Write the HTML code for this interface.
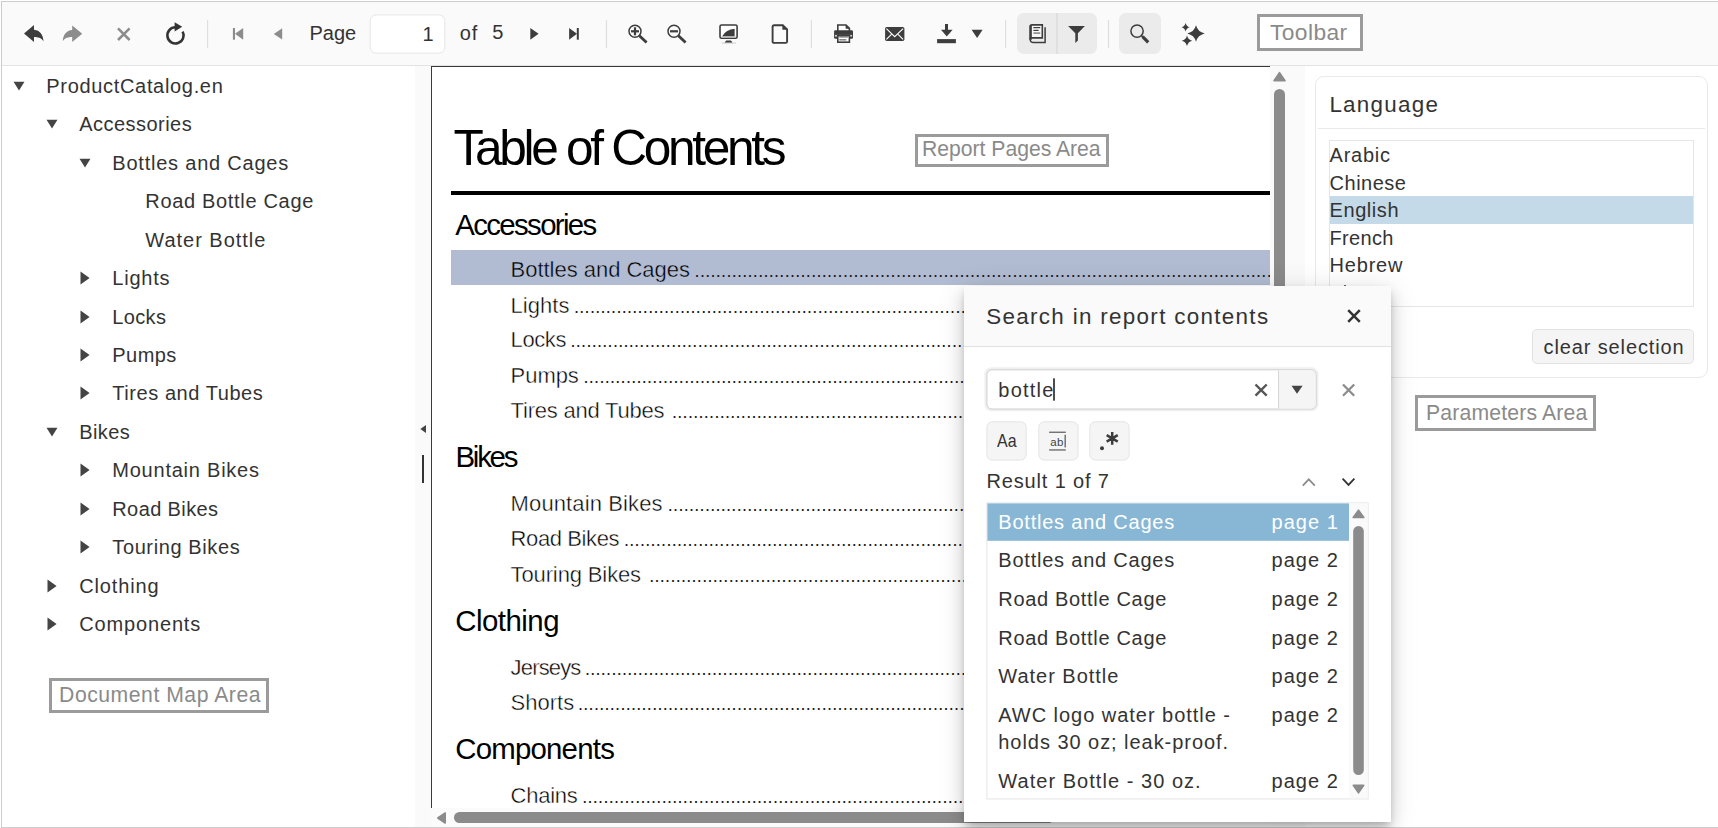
<!DOCTYPE html>
<html><head><meta charset="utf-8"><title>Report Viewer</title>
<style>
html,body{margin:0;padding:0;background:#fff;}
body{width:1718px;height:828px;position:relative;overflow:hidden;font-family:"Liberation Sans", sans-serif;}
div,span,svg{box-sizing:border-box;}
.t{position:absolute;white-space:pre;line-height:1;font-family:"Liberation Sans", sans-serif;}
</style></head><body>
<div style="position:absolute;left:1px;top:1px;width:1717px;height:827px;border:1px solid #cdcdcd;border-right:none;background:#fff;"></div>
<div style="position:absolute;left:2px;top:2px;width:1716px;height:63px;background:#fafafa;"></div>
<div style="position:absolute;left:2px;top:65px;width:1716px;height:1px;background:#e3e3e3;"></div>
<div style="position:absolute;left:415px;top:66px;width:16px;height:761px;background:#fafafa;"></div>
<div style="position:absolute;left:431px;top:808px;width:839px;height:19px;background:#fbfbfb;"></div>
<div style="position:absolute;left:1270px;top:66px;width:35px;height:761px;background:#fafafa;"></div>
<div style="position:absolute;left:431px;top:66px;width:839px;height:742px;border-left:1px solid #3a3a3a;border-top:1px solid #3a3a3a;background:#fff;"></div>
<span class="t" style="left:46.3px;top:76px;font-size:20.0px;letter-spacing:0.677px;color:#333;">ProductCatalog.en</span>
<svg style="position:absolute;left:12px;top:80.4px" width="14" height="12" viewBox="0 0 14 12"><path d="M1.5 1.7 L12.5 1.7 L7 10.6 Z" fill="#444"/></svg>
<span class="t" style="left:79.3px;top:114px;font-size:20.0px;letter-spacing:0.455px;color:#333;">Accessories</span>
<svg style="position:absolute;left:45px;top:118.4px" width="14" height="12" viewBox="0 0 14 12"><path d="M1.5 1.7 L12.5 1.7 L7 10.6 Z" fill="#444"/></svg>
<span class="t" style="left:112.3px;top:153px;font-size:20.0px;letter-spacing:0.78px;color:#333;">Bottles and Cages</span>
<svg style="position:absolute;left:78px;top:157.4px" width="14" height="12" viewBox="0 0 14 12"><path d="M1.5 1.7 L12.5 1.7 L7 10.6 Z" fill="#444"/></svg>
<span class="t" style="left:145.3px;top:191px;font-size:20.0px;letter-spacing:0.677px;color:#333;">Road Bottle Cage</span>
<span class="t" style="left:145.3px;top:230px;font-size:20.0px;letter-spacing:0.983px;color:#333;">Water Bottle</span>
<span class="t" style="left:112.3px;top:268px;font-size:20.0px;letter-spacing:0.784px;color:#333;">Lights</span>
<svg style="position:absolute;left:78.9px;top:271.4px" width="12" height="14" viewBox="0 0 12 14"><path d="M1.5 0.6 L10.6 7 L1.5 13.4 Z" fill="#444"/></svg>
<span class="t" style="left:112.3px;top:307px;font-size:20.0px;letter-spacing:0.338px;color:#333;">Locks</span>
<svg style="position:absolute;left:78.9px;top:310.4px" width="12" height="14" viewBox="0 0 12 14"><path d="M1.5 0.6 L10.6 7 L1.5 13.4 Z" fill="#444"/></svg>
<span class="t" style="left:112.3px;top:345px;font-size:20.0px;letter-spacing:0.447px;color:#333;">Pumps</span>
<svg style="position:absolute;left:78.9px;top:348.4px" width="12" height="14" viewBox="0 0 12 14"><path d="M1.5 0.6 L10.6 7 L1.5 13.4 Z" fill="#444"/></svg>
<span class="t" style="left:112.3px;top:383px;font-size:20.0px;letter-spacing:0.56px;color:#333;">Tires and Tubes</span>
<svg style="position:absolute;left:78.9px;top:386.4px" width="12" height="14" viewBox="0 0 12 14"><path d="M1.5 0.6 L10.6 7 L1.5 13.4 Z" fill="#444"/></svg>
<span class="t" style="left:79.3px;top:422px;font-size:20.0px;letter-spacing:0.397px;color:#333;">Bikes</span>
<svg style="position:absolute;left:45px;top:426.4px" width="14" height="12" viewBox="0 0 14 12"><path d="M1.5 1.7 L12.5 1.7 L7 10.6 Z" fill="#444"/></svg>
<span class="t" style="left:112.3px;top:460px;font-size:20.0px;letter-spacing:0.767px;color:#333;">Mountain Bikes</span>
<svg style="position:absolute;left:78.9px;top:463.4px" width="12" height="14" viewBox="0 0 12 14"><path d="M1.5 0.6 L10.6 7 L1.5 13.4 Z" fill="#444"/></svg>
<span class="t" style="left:112.3px;top:499px;font-size:20.0px;letter-spacing:0.383px;color:#333;">Road Bikes</span>
<svg style="position:absolute;left:78.9px;top:502.4px" width="12" height="14" viewBox="0 0 12 14"><path d="M1.5 0.6 L10.6 7 L1.5 13.4 Z" fill="#444"/></svg>
<span class="t" style="left:112.3px;top:537px;font-size:20.0px;letter-spacing:0.607px;color:#333;">Touring Bikes</span>
<svg style="position:absolute;left:78.9px;top:540.4px" width="12" height="14" viewBox="0 0 12 14"><path d="M1.5 0.6 L10.6 7 L1.5 13.4 Z" fill="#444"/></svg>
<span class="t" style="left:79.3px;top:576px;font-size:20.0px;letter-spacing:0.838px;color:#333;">Clothing</span>
<svg style="position:absolute;left:45.900000000000006px;top:579.4px" width="12" height="14" viewBox="0 0 12 14"><path d="M1.5 0.6 L10.6 7 L1.5 13.4 Z" fill="#444"/></svg>
<span class="t" style="left:79.3px;top:614px;font-size:20.0px;letter-spacing:0.839px;color:#333;">Components</span>
<svg style="position:absolute;left:45.900000000000006px;top:617.4px" width="12" height="14" viewBox="0 0 12 14"><path d="M1.5 0.6 L10.6 7 L1.5 13.4 Z" fill="#444"/></svg>
<svg style="position:absolute;left:418px;top:424px" width="10" height="10" viewBox="0 0 10 10"><path d="M2.3 5 L8 1.1 L8 8.9 Z" fill="#444"/></svg>
<div style="position:absolute;left:422px;top:455px;width:2px;height:28px;background:#333;"></div>
<svg style="position:absolute;left:0;top:0" width="1718" height="66" viewBox="0 0 1718 66"><rect x="1017" y="13" width="80" height="41" rx="6.5" fill="#ebebeb"/><rect x="1056.3" y="13" width="1.3" height="41" fill="#dadada"/><rect x="1119" y="13" width="42" height="41" rx="6.5" fill="#ebebeb"/><rect x="207.0" y="20" width="1.2" height="28" fill="#dfdfdf"/><rect x="605.9" y="20" width="1.2" height="28" fill="#dfdfdf"/><rect x="810.8" y="20" width="1.2" height="28" fill="#dfdfdf"/><rect x="1005.0" y="20" width="1.2" height="28" fill="#dfdfdf"/><rect x="1107.9" y="20" width="1.2" height="28" fill="#dfdfdf"/><path d="M24 33.5 L34 25 L34 29.8 C40 30.3 43.2 35 43.5 41.2 C41 37.6 38 36.9 34 36.9 L34 42 Z" fill="#3d3d3d"/><path d="M82.2 33.7 L72.2 25.4 L72.2 30 C66.2 30.5 63 35 62.8 41.3 C65.2 37.8 68.2 37.1 72.2 37.1 L72.2 42 Z" fill="#8c8c8c"/><path d="M118 28.4 L129.6 40 M129.6 28.4 L118 40" stroke="#8c8c8c" stroke-width="2.5" fill="none"/><path d="M182.65 31.60 A8.1 8.1 0 1 1 175.5 27.299999999999997" stroke="#333" stroke-width="2.6" fill="none"/><path d="M174.6 22.3 L182.2 26.8 L174.6 31.4 Z" fill="#333"/><rect x="232.9" y="28" width="2.1" height="11.7" fill="#8c8c8c"/><path d="M243.2 28 L243.2 39.7 L235 33.85 Z" fill="#8c8c8c"/><path d="M282.2 28.3 L282.2 39.6 L273.8 33.95 Z" fill="#8c8c8c"/><rect x="370.2" y="14.9" width="74.6" height="38.3" rx="6" fill="#fff" stroke="#e6e6e6" stroke-width="1"/><path d="M530.3 28 L530.3 39.7 L538.6 33.85 Z" fill="#3d3d3d"/><path d="M569.1 28 L569.1 39.7 L577 33.85 Z" fill="#3d3d3d"/><rect x="576.8" y="28" width="2" height="11.7" fill="#3d3d3d"/><circle cx="635" cy="31.3" r="6" fill="none" stroke="#3d3d3d" stroke-width="1.5"/><path d="M639.4 35.8 L646.6 42.6" stroke="#3d3d3d" stroke-width="2.8"/><rect x="631" y="30.2" width="8" height="2.2" fill="#3d3d3d"/><rect x="633.9" y="27.3" width="2.2" height="8" fill="#3d3d3d"/><circle cx="674" cy="31.3" r="6" fill="none" stroke="#3d3d3d" stroke-width="1.5"/><path d="M678.4 35.8 L685.6 42.6" stroke="#3d3d3d" stroke-width="2.8"/><rect x="670" y="30.2" width="8" height="2.2" fill="#3d3d3d"/><rect x="720" y="25" width="17.1" height="13.2" rx="1.5" fill="#fff" stroke="#3d3d3d" stroke-width="1.6"/><rect x="721.4" y="36.4" width="14.3" height="1.2" fill="#c4c4c4"/><path d="M722.2 36.3 Q726 29.3 734.6 28.7 L734.6 36.3 Z" fill="#3d3d3d"/><path d="M726.2 40.4 L731 40.4 L732.6 42.7 L724.6 42.7 Z" fill="#3d3d3d"/><rect x="721.5" y="42.7" width="14.5" height="0.8" fill="#c8c8c8"/><path d="M774.2 25.2 L782.8 25.2 L787.1 29.4 L787.1 41.4 Q787.1 42.9 785.6 42.9 L774.2 42.9 Q772.6 42.9 772.6 41.4 L772.6 26.8 Q772.6 25.2 774.2 25.2 Z" fill="#fafafa" stroke="#3d3d3d" stroke-width="1.9"/><path d="M782.4 24.6 L788 29.8 L782.4 29.8 Z" fill="#3d3d3d"/><rect x="834.1" y="30.2" width="18.9" height="8.5" rx="1.3" fill="#3d3d3d"/><path d="M837.8 31 L837.8 25 L846 25 L849.4 28.4 L849.4 31 Z" fill="#fff" stroke="#3d3d3d" stroke-width="1.6"/><path d="M845.6 24.4 L850 28.8 L845.6 28.8 Z" fill="#3d3d3d"/><rect x="835" y="34.9" width="17.1" height="1.7" fill="#cfcfcf"/><rect x="837.8" y="35.6" width="11.6" height="6.6" fill="#fff" stroke="#3d3d3d" stroke-width="1.6"/><rect x="839.3" y="36.1" width="8.6" height="1.5" fill="#7a7a7a"/><rect x="839.3" y="39.1" width="7" height="1.4" fill="#7a7a7a"/><rect x="885.1" y="27" width="19.3" height="13.9" rx="1.6" fill="#3d3d3d"/><path d="M886.4 28.6 L894.7 36.7 L903.1 28.6 M886.4 39.4 L891.4 34.4 M903.1 39.4 L898.1 34.4" stroke="#fff" stroke-width="1.1" fill="none"/><rect x="945" y="24" width="3" height="6.2" fill="#3d3d3d"/><path d="M941 29.8 L952.6 29.8 L946.8 36.6 Z" fill="#3d3d3d"/><rect x="937.1" y="39.1" width="18.8" height="4.1" fill="#3d3d3d"/><path d="M971.6 29.8 L982.6 29.8 L977.1 38 Z" fill="#3d3d3d"/><path d="M1031.8 24.9 L1042.3 24.9 L1042.3 37.9 L1030.4 37.9 L1030.4 26.3 Q1030.4 24.9 1031.8 24.9 Z" fill="#f6f6f6" stroke="#3d3d3d" stroke-width="1.6"/><rect x="1029.4" y="25.2" width="2.4" height="14.5" fill="#3d3d3d"/><path d="M1030.2 38 Q1029.8 42.5 1033 42.5 L1045.1 42.5 L1045.1 27.2" fill="none" stroke="#3d3d3d" stroke-width="1.5"/><rect x="1033.4" y="27" width="6.8" height="1.2" fill="#3d3d3d"/><rect x="1033.4" y="29.8" width="5.2" height="1.2" fill="#3d3d3d"/><rect x="1033.4" y="32.3" width="6.8" height="1.6" fill="#8a8a8a"/><path d="M1068.1 25.9 L1084.9 25.9 L1077.9 33.2 L1077.9 40.5 L1075.3 43 L1075.3 33.2 Z" fill="#3d3d3d"/><circle cx="1137.05" cy="31.1" r="6.15" fill="none" stroke="#3d3d3d" stroke-width="1.5"/><path d="M1141.4 35.5 L1143 37.1" stroke="#3d3d3d" stroke-width="1.6"/><path d="M1142.6 36.7 L1148.2 42.3" stroke="#3d3d3d" stroke-width="3.2"/><path d="M1196 25.250000000000004 Q1197.74 31.810000000000002 1204.7 33.45 Q1197.74 35.09 1196 41.650000000000006 Q1194.26 35.09 1187.3 33.45 Q1194.26 31.810000000000002 1196 25.250000000000004Z" fill="#3d3d3d"/><path d="M1185.6 23.0 Q1186.4199999999998 26.44 1189.6999999999998 27.3 Q1186.4199999999998 28.16 1185.6 31.6 Q1184.78 28.16 1181.5 27.3 Q1184.78 26.44 1185.6 23.0Z" fill="#3d3d3d"/><path d="M1187 35.5 Q1188.04 39.739999999999995 1192.2 40.8 Q1188.04 41.86 1187 46.099999999999994 Q1185.96 41.86 1181.8 40.8 Q1185.96 39.739999999999995 1187 35.5Z" fill="#3d3d3d"/></svg>
<span class="t" style="left:309.5px;top:23px;font-size:20.0px;letter-spacing:-0.027px;color:#333;">Page</span>
<span class="t" style="left:422.6px;top:24px;font-size:20.0px;letter-spacing:1.125px;color:#333;">1</span>
<span class="t" style="left:459.8px;top:23px;font-size:20.0px;letter-spacing:0.938px;color:#333;">of</span>
<span class="t" style="left:492.2px;top:22px;font-size:20.0px;letter-spacing:1.125px;color:#333;">5</span>
<span class="t" style="left:453.6px;top:124px;font-size:49.6px;letter-spacing:-3.317px;color:#000;">Table of Contents</span>
<div style="position:absolute;left:451px;top:191px;width:819px;height:4px;background:#000;"></div>
<span class="t" style="left:455.3px;top:210px;font-size:29.4px;letter-spacing:-1.649px;color:#000;">Accessories</span>
<span class="t" style="left:455.5px;top:442px;font-size:29.4px;letter-spacing:-2.235px;color:#000;">Bikes</span>
<span class="t" style="left:455.2px;top:606px;font-size:29.4px;letter-spacing:-0.505px;color:#000;">Clothing</span>
<span class="t" style="left:455.2px;top:734px;font-size:29.4px;letter-spacing:-0.776px;color:#000;">Components</span>
<div style="position:absolute;left:451px;top:250px;width:819px;height:35px;background:#b1bcd2;"></div>
<span class="t" style="left:510.6px;top:259px;font-size:22px;letter-spacing:-0.028px;color:#000;-webkit-text-stroke:0.42px #b1bcd2;">Bottles and Cages</span>
<div style="position:absolute;left:694.6px;top:262px;width:575.4px;height:20px;overflow:hidden;white-space:pre;font-size:18px;line-height:1;letter-spacing:0.296px;color:#1a1a1a;">........................................................................................................................................</div>
<span class="t" style="left:510.6px;top:295px;font-size:22px;letter-spacing:0.03px;color:#000;-webkit-text-stroke:0.42px #fff;">Lights</span>
<div style="position:absolute;left:574.0px;top:298px;width:696.0px;height:20px;overflow:hidden;white-space:pre;font-size:18px;line-height:1;letter-spacing:0.296px;color:#1a1a1a;">........................................................................................................................................</div>
<span class="t" style="left:510.6px;top:329px;font-size:22px;letter-spacing:-0.417px;color:#000;-webkit-text-stroke:0.42px #fff;">Locks</span>
<div style="position:absolute;left:570.5px;top:332px;width:699.5px;height:20px;overflow:hidden;white-space:pre;font-size:18px;line-height:1;letter-spacing:0.296px;color:#1a1a1a;">........................................................................................................................................</div>
<span class="t" style="left:510.6px;top:365px;font-size:22px;letter-spacing:-0.057px;color:#000;-webkit-text-stroke:0.42px #fff;">Pumps</span>
<div style="position:absolute;left:583.5px;top:368px;width:686.5px;height:20px;overflow:hidden;white-space:pre;font-size:18px;line-height:1;letter-spacing:0.296px;color:#1a1a1a;">........................................................................................................................................</div>
<span class="t" style="left:510.6px;top:400px;font-size:22px;letter-spacing:-0.216px;color:#000;-webkit-text-stroke:0.42px #fff;">Tires and Tubes</span>
<div style="position:absolute;left:672.0px;top:403px;width:598.0px;height:20px;overflow:hidden;white-space:pre;font-size:18px;line-height:1;letter-spacing:0.296px;color:#1a1a1a;">........................................................................................................................................</div>
<span class="t" style="left:510.6px;top:493px;font-size:22px;letter-spacing:0.12px;color:#000;-webkit-text-stroke:0.42px #fff;">Mountain Bikes</span>
<div style="position:absolute;left:667.8px;top:496px;width:602.2px;height:20px;overflow:hidden;white-space:pre;font-size:18px;line-height:1;letter-spacing:0.296px;color:#1a1a1a;">........................................................................................................................................</div>
<span class="t" style="left:510.6px;top:528px;font-size:22px;letter-spacing:-0.402px;color:#000;-webkit-text-stroke:0.42px #fff;">Road Bikes</span>
<div style="position:absolute;left:624.0px;top:531px;width:646.0px;height:20px;overflow:hidden;white-space:pre;font-size:18px;line-height:1;letter-spacing:0.296px;color:#1a1a1a;">........................................................................................................................................</div>
<span class="t" style="left:510.6px;top:564px;font-size:22px;letter-spacing:-0.129px;color:#000;-webkit-text-stroke:0.42px #fff;">Touring Bikes</span>
<div style="position:absolute;left:649.2px;top:567px;width:620.8px;height:20px;overflow:hidden;white-space:pre;font-size:18px;line-height:1;letter-spacing:0.296px;color:#1a1a1a;">........................................................................................................................................</div>
<span class="t" style="left:510.6px;top:657px;font-size:22px;letter-spacing:-0.842px;color:#000;-webkit-text-stroke:0.42px #fff;">Jerseys</span>
<div style="position:absolute;left:584.9px;top:660px;width:685.1px;height:20px;overflow:hidden;white-space:pre;font-size:18px;line-height:1;letter-spacing:0.296px;color:#1a1a1a;">........................................................................................................................................</div>
<span class="t" style="left:510.6px;top:692px;font-size:22px;letter-spacing:0.001px;color:#000;-webkit-text-stroke:0.42px #fff;">Shorts</span>
<div style="position:absolute;left:578.0px;top:695px;width:692.0px;height:20px;overflow:hidden;white-space:pre;font-size:18px;line-height:1;letter-spacing:0.296px;color:#1a1a1a;">........................................................................................................................................</div>
<span class="t" style="left:510.6px;top:785px;font-size:22px;letter-spacing:-0.264px;color:#000;-webkit-text-stroke:0.42px #fff;">Chains</span>
<div style="position:absolute;left:582.2px;top:788px;width:687.8px;height:20px;overflow:hidden;white-space:pre;font-size:18px;line-height:1;letter-spacing:0.296px;color:#1a1a1a;">........................................................................................................................................</div>
<div style="position:absolute;left:915px;top:134px;width:194px;height:33px;border:3px solid #9b9b9b;background:#fff;"></div>
<span class="t" style="left:922.0px;top:138px;font-size:21.2px;letter-spacing:-0.025px;color:#8a8a8a;">Report Pages Area</span>
<div style="position:absolute;left:1257px;top:14px;width:106px;height:37px;border:3px solid #9b9b9b;background:#fff;"></div>
<span class="t" style="left:1269.9px;top:21px;font-size:22.8px;letter-spacing:0.417px;color:#8a8a8a;">Toolbar</span>
<div style="position:absolute;left:49px;top:678px;width:220px;height:35px;border:3px solid #9b9b9b;background:#fff;"></div>
<span class="t" style="left:59.1px;top:684px;font-size:21.2px;letter-spacing:0.515px;color:#8a8a8a;">Document Map Area</span>
<div style="position:absolute;left:1415px;top:395px;width:181px;height:36px;border:3px solid #9b9b9b;background:#fff;"></div>
<span class="t" style="left:1426.0px;top:402px;font-size:21.2px;letter-spacing:0.168px;color:#8a8a8a;">Parameters Area</span>
<svg style="position:absolute;left:1270px;top:66px" width="20" height="30" viewBox="0 0 20 30"><path d="M4 14.8 L9.5 6.6 L15 14.8 Z" fill="#8b8b8b" stroke="#8b8b8b" stroke-width="1.6" stroke-linejoin="round"/></svg>
<div style="position:absolute;left:1274px;top:89px;width:11px;height:300px;background:#8b8b8b;border-radius:5.5px;"></div>
<svg style="position:absolute;left:431px;top:808px" width="30" height="19" viewBox="0 0 30 19"><path d="M14.2 5 L14.2 15 L6.8 10 Z" fill="#8b8b8b" stroke="#8b8b8b" stroke-width="1.6" stroke-linejoin="round"/></svg>
<div style="position:absolute;left:454px;top:812px;width:600px;height:11px;background:#8b8b8b;border-radius:5.5px;"></div>
<div style="position:absolute;left:1315px;top:76px;width:393px;height:302px;border:1px solid #e9e9e9;border-radius:9px;background:#fff;"></div>
<span class="t" style="left:1329.4px;top:94px;font-size:22.4px;letter-spacing:1.273px;color:#333;">Language</span>
<div style="position:absolute;left:1318px;top:128px;width:387px;height:1px;background:#e9e9e9;"></div>
<div style="position:absolute;left:1329px;top:140px;width:365px;height:167px;border:1px solid #e6e6e6;background:#fff;"></div>
<div style="position:absolute;left:1330px;top:196px;width:363px;height:28px;background:#c4dae8;"></div>
<span class="t" style="left:1329.6px;top:145px;font-size:20.0px;letter-spacing:0.721px;color:#333;">Arabic</span>
<span class="t" style="left:1329.6px;top:173px;font-size:20.0px;letter-spacing:0.502px;color:#333;">Chinese</span>
<span class="t" style="left:1329.6px;top:200px;font-size:20.0px;letter-spacing:0.558px;color:#333;">English</span>
<span class="t" style="left:1329.6px;top:228px;font-size:20.0px;letter-spacing:0.292px;color:#333;">French</span>
<span class="t" style="left:1329.6px;top:255px;font-size:20.0px;letter-spacing:0.784px;color:#333;">Hebrew</span>
<div style="position:absolute;left:1344px;top:285px;width:2px;height:1px;background:#666;"></div>
<div style="position:absolute;left:1532px;top:329px;width:162px;height:35px;border:1px solid #e2e2e2;border-radius:5px;background:#f5f5f5;"></div>
<span class="t" style="left:1543.6px;top:337px;font-size:20.0px;letter-spacing:0.873px;color:#333;">clear selection</span>
<div style="position:absolute;left:964px;top:286px;width:427px;height:536px;background:#fff;box-shadow:0 4.5px 7.5px -1.5px rgba(0,0,0,.2),0 9px 15px 0 rgba(0,0,0,.14),0 1.5px 27px 0 rgba(0,0,0,.12);"></div>
<div style="position:absolute;left:964px;top:286px;width:427px;height:60px;background:#fafafa;"></div>
<div style="position:absolute;left:964px;top:346px;width:427px;height:1px;background:#e2e2e2;"></div>
<span class="t" style="left:986.3px;top:306px;font-size:22.4px;letter-spacing:1.317px;color:#333;">Search in report contents</span>
<svg style="position:absolute;left:0;top:0" width="1718" height="828" viewBox="0 0 1718 828"><path d="M1348.2 310.2 L1359.8 321.8 M1359.8 310.2 L1348.2 321.8" stroke="#333" stroke-width="2.5" fill="none"/><rect x="984.4" y="367.3" width="334" height="44" rx="7" fill="#f0f0f0"/><rect x="986.9" y="369.8" width="329.2" height="39.2" rx="5" fill="#fff" stroke="#cfcfcf" stroke-width="1"/><path d="M1278.6 370.3 L1311 370.3 Q1315.6 370.3 1315.6 375 L1315.6 403.8 Q1315.6 408.5 1311 408.5 L1278.6 408.5 Z" fill="#f5f5f5"/><rect x="1278.1" y="370.3" width="1" height="38.2" fill="#d4d4d4"/><path d="M1255.5 384.5 L1266.7 395.7 M1266.7 384.5 L1255.5 395.7" stroke="#555" stroke-width="2.4" fill="none"/><path d="M1291.5 385.8 L1302.6 385.8 L1297.05 393.7 Z" fill="#444"/><path d="M1343 384.5 L1354.2 395.7 M1354.2 384.5 L1343 395.7" stroke="#8c8c8c" stroke-width="2.3" fill="none"/><rect x="1053.2" y="378.3" width="1.6" height="22.4" fill="#222"/><rect x="986.9" y="421.8" width="39.3" height="38.3" rx="5.5" fill="#f5f5f5" stroke="#e4e4e4" stroke-width="1"/><rect x="1038.8" y="421.8" width="39.3" height="38.3" rx="5.5" fill="#f5f5f5" stroke="#e4e4e4" stroke-width="1"/><rect x="1089.8" y="421.8" width="39.3" height="38.3" rx="5.5" fill="#f5f5f5" stroke="#e4e4e4" stroke-width="1"/><rect x="1049.1" y="431.6" width="16.7" height="1.3" fill="#666"/><rect x="1049.1" y="449.3" width="16.7" height="1.3" fill="#666"/><rect x="1064.6" y="434.8" width="1.1" height="12.6" fill="#444"/><circle cx="1102" cy="448.3" r="2" fill="#3d3d3d"/><path d="M1112.2 438.4 L1112.20 432.00 M1112.2 438.4 L1117.74 435.20 M1112.2 438.4 L1117.74 441.60 M1112.2 438.4 L1112.20 444.80 M1112.2 438.4 L1106.66 441.60 M1112.2 438.4 L1106.66 435.20 " stroke="#3d3d3d" stroke-width="2.5" fill="none"/><path d="M1302.8 485.6 L1308.8 479.3 L1314.8 485.6" stroke="#8c8c8c" stroke-width="1.8" fill="none"/><path d="M1342.6 478.6 L1348.5 484.9 L1354.4 478.6" stroke="#333" stroke-width="1.8" fill="none"/><rect x="986.9" y="502.9" width="381.2" height="296" fill="#fff" stroke="#e4e4e4" stroke-width="1"/><rect x="1349" y="503.4" width="18.6" height="295" fill="#fafafa"/><rect x="987.4" y="503.4" width="361.6" height="37.4" fill="#88b7d5"/><path d="M1353.2 517.4 L1358.5 510.2 L1363.8 517.4 Z" fill="#8b8b8b" stroke="#8b8b8b" stroke-width="1.6" stroke-linejoin="round"/><rect x="1353.2" y="526" width="10.6" height="249" rx="5.3" fill="#8b8b8b"/><path d="M1353.3 785.4 L1358.5 792.8 L1363.7 785.4 Z" fill="#8b8b8b" stroke="#8b8b8b" stroke-width="1.6" stroke-linejoin="round"/></svg>
<span class="t" style="left:998.3px;top:380px;font-size:20.0px;letter-spacing:1.227px;color:#333;">bottle</span>
<span class="t" style="left:996.6px;top:431px;font-size:19px;color:#333;transform:scaleX(0.84);transform-origin:0 0;">Aa</span>
<span class="t" style="left:1050.3px;top:437px;font-size:11.5px;letter-spacing:0.402px;color:#444;">ab</span>
<span class="t" style="left:986.5px;top:471px;font-size:20.0px;letter-spacing:0.846px;color:#333;">Result 1 of 7</span>
<span class="t" style="left:998.3px;top:512px;font-size:20.0px;letter-spacing:0.78px;color:#fff;">Bottles and Cages</span>
<span class="t" style="left:1271.6px;top:512px;font-size:20.0px;letter-spacing:1.014px;color:#fff;">page 1</span>
<span class="t" style="left:998.3px;top:550px;font-size:20.0px;letter-spacing:0.78px;color:#333;">Bottles and Cages</span>
<span class="t" style="left:1271.6px;top:550px;font-size:20.0px;letter-spacing:1.014px;color:#333;">page 2</span>
<span class="t" style="left:998.3px;top:589px;font-size:20.0px;letter-spacing:0.677px;color:#333;">Road Bottle Cage</span>
<span class="t" style="left:1271.6px;top:589px;font-size:20.0px;letter-spacing:1.014px;color:#333;">page 2</span>
<span class="t" style="left:998.3px;top:628px;font-size:20.0px;letter-spacing:0.677px;color:#333;">Road Bottle Cage</span>
<span class="t" style="left:1271.6px;top:628px;font-size:20.0px;letter-spacing:1.014px;color:#333;">page 2</span>
<span class="t" style="left:998.3px;top:666px;font-size:20.0px;letter-spacing:0.983px;color:#333;">Water Bottle</span>
<span class="t" style="left:1271.6px;top:666px;font-size:20.0px;letter-spacing:1.014px;color:#333;">page 2</span>
<span class="t" style="left:998.3px;top:705px;font-size:20.0px;letter-spacing:0.963px;color:#333;">AWC logo water bottle -</span>
<span class="t" style="left:1271.6px;top:705px;font-size:20.0px;letter-spacing:1.014px;color:#333;">page 2</span>
<span class="t" style="left:998.3px;top:732px;font-size:20.0px;letter-spacing:0.954px;color:#333;">holds 30 oz; leak-proof.</span>
<span class="t" style="left:998.3px;top:771px;font-size:20.0px;letter-spacing:1.04px;color:#333;">Water Bottle - 30 oz.</span>
<span class="t" style="left:1271.6px;top:771px;font-size:20.0px;letter-spacing:1.014px;color:#333;">page 2</span>
</body></html>
